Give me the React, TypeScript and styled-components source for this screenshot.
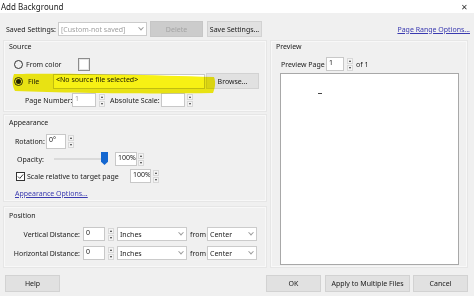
import { FC, ReactNode } from 'react';
import styled, { createGlobalStyle } from 'styled-components';

// - - - - - - GLOBAL

const GlobalStyle = createGlobalStyle`
    * {
        box-sizing: border-box;
    }

    body {
        margin: 0;
        background: #ffffff;
        font-family: 'Noto Sans', 'Open Sans', sans-serif;
        font-size: 7px;
        color: #1a1a1a;
    }
`;

// - - - - - - STYLED-COMPONENTS

const Dialog = styled.div`
    width: 474px;
    height: 296px;
    background: #f0f0f0;
    display: flex;
    flex-direction: column;
    overflow: hidden;
`;

const TitleBar = styled.div`
    height: 13px;
    background: #ffffff;
    display: flex;
    align-items: center;
    justify-content: space-between;
    padding: 0 6px 0 1px;
    font-size: 8px;
`;

const Close = styled.span`
    font-size: 8px;
    color: #333;
`;

const Toolbar = styled.div`
    display: flex;
    align-items: center;
    height: 16px;
    margin: 8px 0 3px;
    padding: 0 4px 0 6px;
`;

const Label = styled.span<{ $w?: number; $ml?: number; $right?: boolean }>`
    display: inline-block;
    white-space: nowrap;
    width: ${(p) => (p.$w ? `${p.$w}px` : 'auto')};
    margin-left: ${(p) => p.$ml ?? 0}px;
    text-align: ${(p) => (p.$right ? 'right' : 'left')};
    flex-shrink: 0;
`;

const Combo = styled.div<{ $w: number; $ml?: number; $disabled?: boolean }>`
    width: ${(p) => p.$w}px;
    height: 14px;
    margin-left: ${(p) => p.$ml ?? 0}px;
    background: #ffffff;
    border: 1px solid #cbcbcb;
    display: flex;
    align-items: center;
    justify-content: space-between;
    padding: 0 3px 0 2px;
    color: ${(p) => (p.$disabled ? '#a0a0a0' : '#1a1a1a')};
    flex-shrink: 0;
`;

const Chevron = styled.span`
    width: 4px;
    height: 4px;
    border-right: 1px solid #9a9a9a;
    border-bottom: 1px solid #9a9a9a;
    transform: rotate(45deg) translate(-1px, -1px);
`;

const Button = styled.div<{ $w: number; $ml?: number; $h?: number; $disabled?: boolean }>`
    width: ${(p) => p.$w}px;
    height: ${(p) => p.$h ?? 16}px;
    margin-left: ${(p) => p.$ml ?? 0}px;
    background: ${(p) => (p.$disabled ? '#cccccc' : '#e1e1e1')};
    border: 1px solid ${(p) => (p.$disabled ? '#c6c6c6' : '#d2d2d2')};
    color: ${(p) => (p.$disabled ? '#a4a4a4' : '#1a1a1a')};
    display: flex;
    align-items: center;
    justify-content: center;
    flex-shrink: 0;
`;

const LinkText = styled.span<{ $ml?: number }>`
    color: #3a3ab0;
    text-decoration: underline;
    margin-left: ${(p) => p.$ml ?? 0}px;
    white-space: nowrap;
`;

const Spacer = styled.div`
    flex: 1;
`;

const Main = styled.div`
    display: flex;
    height: 228px;
    padding: 0 6px 0 3px;
    gap: 3px;
`;

const LeftColumn = styled.div`
    width: 264px;
    display: flex;
    flex-direction: column;
`;

const Group = styled.div<{ $h: number; $mt?: number; $pt?: number; $w?: number }>`
    position: relative;
    height: ${(p) => p.$h}px;
    width: ${(p) => (p.$w ? `${p.$w}px` : 'auto')};
    margin-top: ${(p) => p.$mt ?? 0}px;
    padding-top: ${(p) => p.$pt ?? 0}px;
    border: 1px solid #e6e6e6;
    box-shadow: inset 0 0 0 1px #f8f8f8;
`;

const GroupTitle = styled.div`
    height: 12px;
    line-height: 12px;
    padding-left: 5px;
`;

const Row = styled.div<{ $h?: number; $mt?: number; $pl?: number }>`
    display: flex;
    align-items: center;
    height: ${(p) => p.$h ?? 14}px;
    margin-top: ${(p) => p.$mt ?? 0}px;
    padding-left: ${(p) => p.$pl ?? 0}px;
`;

const RadioOption = styled.div<{ $w: number }>`
    width: ${(p) => p.$w}px;
    display: flex;
    align-items: center;
    gap: 3px;
    flex-shrink: 0;
`;

const RadioCircle = styled.span<{ $on?: boolean }>`
    width: 9px;
    height: 9px;
    border-radius: 50%;
    border: 1px solid #333;
    display: flex;
    align-items: center;
    justify-content: center;

    &::after {
        content: '';
        width: 5px;
        height: 5px;
        border-radius: 50%;
        background: ${(p) => (p.$on ? '#222' : 'transparent')};
    }
`;

const Swatch = styled.div`
    width: 12px;
    height: 13px;
    border: 1px solid #8c8c8c;
    background: #ffffff;
    box-shadow: inset 0 0 0 1px #e6e6e6;
`;

const Field = styled.div<{ $w: number; $ml?: number; $h?: number; $muted?: boolean }>`
    width: ${(p) => p.$w}px;
    height: ${(p) => p.$h ?? 14}px;
    margin-left: ${(p) => p.$ml ?? 0}px;
    background: #ffffff;
    border: 1px solid #c8c8c8;
    padding: 0 0 0 2px;
    display: flex;
    align-items: flex-start;
    line-height: 10px;
    color: ${(p) => (p.$muted ? '#a0a0a0' : '#1a1a1a')};
    white-space: nowrap;
    overflow: hidden;
    flex-shrink: 0;
`;

const SpinBox = styled.div<{ $ml?: number }>`
    width: 6px;
    height: 13px;
    margin-left: ${(p) => p.$ml ?? 2}px;
    display: flex;
    flex-direction: column;
    gap: 1px;
    flex-shrink: 0;
`;

const SpinHalf = styled.div<{ $down?: boolean }>`
    flex: 1;
    background: #f4f4f4;
    border: 1px solid #d8d8d8;
    display: flex;
    align-items: center;
    justify-content: center;

    &::after {
        content: '';
        border-left: 1.5px solid transparent;
        border-right: 1.5px solid transparent;
        ${(p) => (p.$down ? 'border-top: 2px solid #333;' : 'border-bottom: 2px solid #333;')}
    }
`;

const Highlight = styled.svg`
    position: absolute;
    left: 6px;
    top: 31px;
    pointer-events: none;
    mix-blend-mode: multiply;
`;

const SliderTrack = styled.div`
    position: relative;
    width: 54px;
    height: 14px;
    margin-left: 7px;
    flex-shrink: 0;

    &::before {
        content: '';
        position: absolute;
        left: 0;
        right: 6px;
        top: 6px;
        height: 2px;
        background: #dadada;
    }
`;

const SliderThumb = styled.div`
    position: absolute;
    right: 0;
    top: 0;
    width: 7px;
    height: 13px;
    background: #1467d0;
    clip-path: polygon(0 0, 100% 0, 100% 75%, 50% 100%, 0 75%);
`;

const CheckBox = styled.svg`
    flex-shrink: 0;
`;

const PreviewArea = styled.div`
    position: relative;
    width: 179px;
    height: 192px;
    margin: 2px 0 0 9px;
    background: #ffffff;
    border: 1px solid #a8a8a8;
`;

const PreviewDash = styled.div`
    position: absolute;
    left: 37px;
    top: 19px;
    width: 4px;
    height: 1px;
    background: #444;
`;

const Footer = styled.div`
    display: flex;
    align-items: center;
    height: 28px;
    padding: 2px 6px 0 5px;
`;

// - - - - - - - - - - - - - - -

const Spin: FC<{ ml?: number }> = ({ ml }) => (
    <SpinBox $ml={ml}>
        <SpinHalf />
        <SpinHalf $down />
    </SpinBox>
);

const Select: FC<{ w: number; ml?: number; children: ReactNode; disabled?: boolean }> = ({ w, ml, children, disabled }) => (
    <Combo $w={w} $ml={ml} $disabled={disabled}>
        <span>{children}</span>
        <Chevron />
    </Combo>
);

const App: FC = () => {
    return (
        <>
            <GlobalStyle />
            <Dialog>
                <TitleBar>
                    <span>Add Background</span>
                    <Close>✕</Close>
                </TitleBar>

                <Toolbar>
                    <Label $w={52}>Saved Settings:</Label>
                    <Select w={89} disabled>
                        [Custom-not saved]
                    </Select>
                    <Button $w={53} $ml={3} $disabled>
                        Delete
                    </Button>
                    <Button $w={55} $ml={4}>
                        Save Settings...
                    </Button>
                    <Spacer />
                    <LinkText>Page Range Options...</LinkText>
                </Toolbar>

                <Main>
                    <LeftColumn>
                        <Group $h={72}>
                            <GroupTitle>Source</GroupTitle>
                            <Row $mt={4} $pl={10}>
                                <RadioOption $w={64}>
                                    <RadioCircle />
                                    <span>From color</span>
                                </RadioOption>
                                <Swatch />
                            </Row>
                            <Row $mt={2} $h={16} $pl={10}>
                                <RadioOption $w={39}>
                                    <RadioCircle $on />
                                    <span style={{ marginLeft: 2 }}>File</span>
                                </RadioOption>
                                <Field $w={152} $h={15}>
                                    &lt;No source file selected&gt;
                                </Field>
                                <Button $w={53} $ml={1}>
                                    Browse...
                                </Button>
                            </Row>
                            <Row $mt={4} $pl={21}>
                                <Label $w={47}>Page Number:</Label>
                                <Field $w={24} $muted>
                                    1
                                </Field>
                                <Spin ml={3} />
                                <Label $ml={5} $w={51}>
                                    Absolute Scale:
                                </Label>
                                <Field $w={24} />
                                <Spin ml={2} />
                            </Row>
                            <Highlight width="206" height="23" viewBox="0 0 206 23">
                                <path
                                    d="M4 2 C30 1 120 2 204 5 C206 10 205 16 203 21 C140 22 60 21 5 19 C2 14 2 7 4 2 Z"
                                    fill="#f6f000"
                                    opacity="0.92"
                                />
                            </Highlight>
                        </Group>

                        <Group $h={88} $mt={2} $pt={2}>
                            <GroupTitle>Appearance</GroupTitle>
                            <Row $mt={5} $h={15} $pl={11}>
                                <Label $w={31}>Rotation:</Label>
                                <Field $w={20} $h={15}>
                                    0°
                                </Field>
                                <Spin ml={2} />
                            </Row>
                            <Row $mt={3} $pl={13}>
                                <Label $w={30}>Opacity:</Label>
                                <SliderTrack>
                                    <SliderThumb />
                                </SliderTrack>
                                <Field $w={22} $ml={7}>
                                    100%
                                </Field>
                                <Spin ml={1} />
                            </Row>
                            <Row $mt={3} $pl={12}>
                                <CheckBox width="9" height="9" viewBox="0 0 9 9">
                                    <rect x="0.5" y="0.5" width="8" height="8" fill="#fff" stroke="#333" />
                                    <path d="M2 4.6 L3.8 6.4 L7.2 2.4" fill="none" stroke="#222" strokeWidth="0.9" />
                                </CheckBox>
                                <Label $ml={2} $w={103}>
                                    Scale relative to target page
                                </Label>
                                <Field $w={21}>100%</Field>
                                <Spin ml={2} />
                            </Row>
                            <Row $mt={5} $h={10} $pl={11}>
                                <LinkText>Appearance Options...</LinkText>
                            </Row>
                        </Group>

                        <Group $h={62} $mt={4} $pt={3}>
                            <GroupTitle>Position</GroupTitle>
                            <Row $mt={5}>
                                <Label $w={76} $right>
                                    Vertical Distance:
                                </Label>
                                <Field $w={22} $ml={3}>
                                    0
                                </Field>
                                <Spin ml={3} />
                                <Select w={70} ml={3}>
                                    Inches
                                </Select>
                                <Label $ml={3} $w={17}>
                                    from
                                </Label>
                                <Select w={50}>Center</Select>
                            </Row>
                            <Row $mt={5}>
                                <Label $w={76} $right>
                                    Horizontal Distance:
                                </Label>
                                <Field $w={22} $ml={3}>
                                    0
                                </Field>
                                <Spin ml={3} />
                                <Select w={70} ml={3}>
                                    Inches
                                </Select>
                                <Label $ml={3} $w={17}>
                                    from
                                </Label>
                                <Select w={50}>Center</Select>
                            </Row>
                        </Group>
                    </LeftColumn>

                    <Group $h={228} $w={198}>
                        <GroupTitle>Preview</GroupTitle>
                        <Row $mt={4} $pl={10}>
                            <Label $w={45}>Preview Page</Label>
                            <Field $w={18}>1</Field>
                            <Spin ml={3} />
                            <Label $ml={3}>of 1</Label>
                        </Row>
                        <PreviewArea>
                            <PreviewDash />
                        </PreviewArea>
                    </Group>
                </Main>

                <Footer>
                    <Button $w={55} $h={17}>
                        Help
                    </Button>
                    <Spacer />
                    <Button $w={55} $h={17}>
                        OK
                    </Button>
                    <Button $w={85} $h={17} $ml={4}>
                        Apply to Multiple Files
                    </Button>
                    <Button $w={55} $h={17} $ml={3}>
                        Cancel
                    </Button>
                </Footer>
            </Dialog>
        </>
    );
};

export default App;
